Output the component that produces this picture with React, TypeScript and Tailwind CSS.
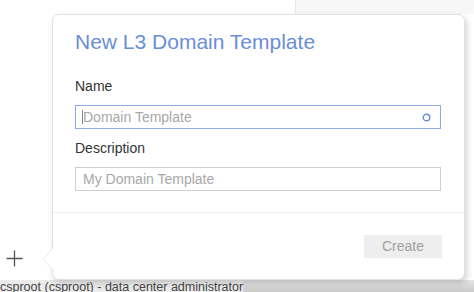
import React from "react";

export default function App() {
  return (
    <div
      className="w-[474px] h-[292px] overflow-hidden bg-white flex flex-col"
      style={{ fontFamily: '"Liberation Sans", Arial, sans-serif' }}
    >
      <div className="flex-1 flex relative">
        {/* background hint at top */}
        <div className="absolute left-[295px] top-0 w-[179px] h-[14px] bg-[#f7f7f7] border-l border-[#e6e6e6]" />
        {/* left gutter */}
        <div className="w-[52px] flex flex-col justify-end pb-[13px] pl-[6px]">
          <svg width="17" height="17" viewBox="0 0 17 17">
            <path d="M8.5 0.5 V16.5 M0.5 8.5 H16.5" stroke="#555" strokeWidth="1.3" fill="none" />
          </svg>
        </div>
        {/* popover */}
        <div className="relative mt-[14px] w-[413px] h-[266px] bg-white rounded-[7px] border border-[#e2e2e2] shadow-[2px_3px_6px_rgba(0,0,0,0.18)] flex flex-col">
          {/* arrow */}
          <svg
            className="absolute left-[-11px] top-[232px]"
            width="12"
            height="24"
            viewBox="0 0 12 24"
          >
            <path d="M12 0 L1 12 L12 24 Z" fill="white" />
            <path d="M12 0 L1 12 L12 24" fill="none" stroke="#e8e8e8" strokeWidth="1" />
          </svg>
          <div className="px-[22px] pt-[15px] flex flex-col">
            <div className="text-[21px] leading-[24px] text-[#6a8ed6]">New L3 Domain Template</div>
            <div className="mt-[22px] text-[14px] leading-[20px] text-[#333]">Name</div>
            <div className="mt-[9px] h-[24px] w-[366px] border border-[#8eaae6] flex items-center pl-[6px] pr-[9px]">
              <div className="w-px h-[14px] bg-[#888]" />
              <span className="text-[14px] text-[#a8a8a8] flex-1">Domain Template</span>
              <svg width="9" height="9" viewBox="0 0 9 9">
                <circle cx="4.5" cy="4.5" r="3.3" fill="none" stroke="#6a8ed6" strokeWidth="1.4" />
              </svg>
            </div>
            <div className="mt-[9px] text-[14px] leading-[20px] text-[#333]">Description</div>
            <div className="mt-[9px] h-[24px] w-[366px] border border-[#cfcfcf] flex items-center pl-[7px]">
              <span className="text-[14px] text-[#a8a8a8]">My Domain Template</span>
            </div>
          </div>
          <div className="mt-[21px] border-t border-[#ececec]" />
          <div className="flex justify-end pr-[22px] pt-[22px]">
            <div className="w-[78px] h-[23px] bg-[#eeeeee] flex items-center justify-center text-[14px] text-[#a0a0a0]">
              Create
            </div>
          </div>
        </div>
      </div>
      <div className="h-[12px] bg-gradient-to-b from-[#e6e6e6] to-[#c9c9c9] flex items-start overflow-hidden">
        <span className="text-[12.5px] leading-[12px] text-[#444] bg-[#ebebeb] pt-[1px] whitespace-nowrap">
          csproot (csproot) - data center administrator
        </span>
      </div>
    </div>
  );
}
